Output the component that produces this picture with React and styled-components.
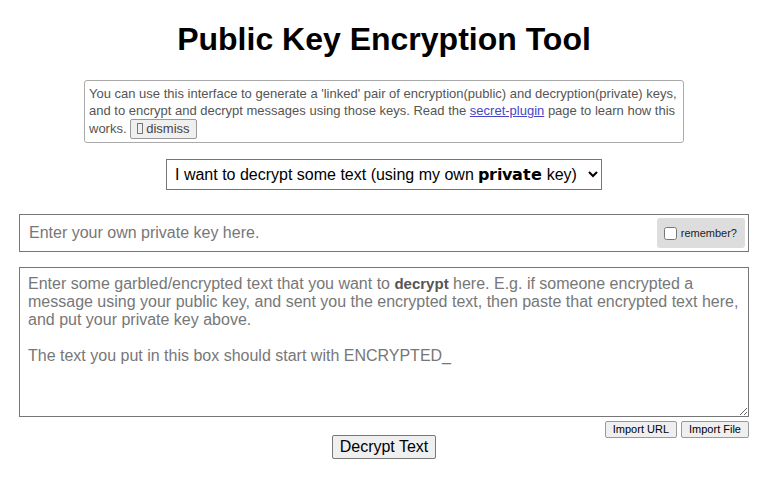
import React, { useState } from 'react'
import styled, { createGlobalStyle } from 'styled-components'

const GlobalStyle = createGlobalStyle`
  body {
    margin: 0;
    background: #fff;
    font-family: "Liberation Sans", Arial, sans-serif;
  }
`

const Page = styled.main`
  display: flex;
  flex-direction: column;
  align-items: center;
  padding: 0 19px;
`

const Title = styled.h1`
  margin: 21px 0 22px;
  font-size: 32px;
  line-height: 37px;
  font-weight: bold;
  color: #000;
`

const Notice = styled.div`
  box-sizing: border-box;
  width: 600px;
  padding: 4px 4px 3px;
  border: 1px solid #aaa;
  border-radius: 3px;
  font-size: 13px;
  line-height: 17px;
  color: #555;
`

const Link = styled.a`
  color: #4646c8;
  text-decoration: underline;
`

const SmallButton = styled.button`
  font-family: inherit;
  font-size: 13px;
  color: ${({ tone }) => tone || '#000'};
  padding: 2px 6px;
  background: #efefef;
  border: 1px solid #999;
  border-radius: 2px;
  line-height: 14px;
`

const Tofu = styled.span`
  display: inline-block;
  width: 4px;
  height: 9px;
  border: 1px solid #777;
  margin-right: 3px;
  vertical-align: -1px;
`

const ModeSelect = styled.select`
  margin-top: 16px;
  width: 436px;
  height: 31px;
  font-family: inherit;
  font-size: 16px;
  color: #000;
  padding: 0 4px;
  border: 1px solid #767676;
  border-radius: 0;
  background: #fff;
`

const KeyRow = styled.div`
  box-sizing: border-box;
  margin-top: 24px;
  width: 100%;
  height: 38px;
  display: flex;
  align-items: center;
  border: 1px solid #777;
  padding: 0 3px 0 9px;
`

const KeyInput = styled.input`
  flex: 1;
  border: none;
  outline: none;
  font-family: inherit;
  font-size: 16px;
  color: #222;
  padding: 0;
  &::placeholder {
    color: #777;
  }
`

const Remember = styled.label`
  display: flex;
  align-items: center;
  gap: 2px;
  height: 30px;
  padding: 0 8px 0 7px;
  background: #ddd;
  border-radius: 3px;
  font-size: 11px;
  color: #222;
  input {
    margin: 0 2px 0 0;
    width: 13px;
    height: 13px;
  }
`

const TextWrap = styled.div`
  position: relative;
  margin-top: 15px;
  width: 100%;
  height: 150px;
`

const CipherText = styled.textarea`
  box-sizing: border-box;
  display: block;
  width: 100%;
  height: 150px;
  border: 1px solid #777;
  padding: 7px 9px;
  font-family: inherit;
  font-size: 16px;
  line-height: 18px;
  color: #222;
  resize: vertical;
  outline: none;
`

const Hint = styled.div`
  position: absolute;
  top: 8px;
  left: 9px;
  right: 9px;
  font-size: 16px;
  line-height: 18px;
  color: #777;
  pointer-events: none;
  p {
    margin: 0 0 18px;
  }
  b {
    color: #555;
    font-size: 15px;
  }
`

const ImportBar = styled.div`
  width: 100%;
  display: flex;
  justify-content: flex-end;
  gap: 4px;
  margin-top: 4px;
  height: 17px;
`

const ImportButton = styled(SmallButton)`
  font-size: 11px;
  line-height: 13px;
  padding: 1px 7px;
`

const DecryptButton = styled.button`
  margin-top: -3px;
  font-family: inherit;
  font-size: 16px;
  color: #000;
  padding: 2px 7px;
  background: #efefef;
  border: 1px solid #777;
  border-radius: 2px;
  line-height: 18px;
`

export default function App () {
  const [key, setKey] = useState('')
  const [text, setText] = useState('')
  const [showNotice, setShowNotice] = useState(true)
  return (
    <Page>
      <GlobalStyle />
      <Title>Public Key Encryption Tool</Title>
      {showNotice && (
        <Notice>
          You can use this interface to generate a 'linked' pair of encryption(public) and decryption(private) keys,
          and to encrypt and decrypt messages using those keys. Read the <Link href='#'>secret-plugin</Link> page
          to learn how this works.{' '}
          <SmallButton tone='#444' onClick={() => setShowNotice(false)}><Tofu />dismiss</SmallButton>
        </Notice>
      )}
      <ModeSelect defaultValue='decrypt'>
        <option value='generate'>I want to generate a new pair of keys</option>
        <option value='encrypt'>I want to encrypt some text (using someone's public key)</option>
        <option value='decrypt'>I want to decrypt some text (using my own 𝗽𝗿𝗶𝘃𝗮𝘁𝗲 key)</option>
      </ModeSelect>
      <KeyRow>
        <KeyInput
          value={key}
          onChange={e => setKey(e.target.value)}
          placeholder='Enter your own private key here.'
        />
        <Remember><input type='checkbox' />remember?</Remember>
      </KeyRow>
      <TextWrap>
        <CipherText value={text} onChange={e => setText(e.target.value)} />
        {!text && (
          <Hint>
            <p>
              Enter some garbled/encrypted text that you want to <b>decrypt</b> here. E.g. if someone encrypted a
              message using your public key, and sent you the encrypted text, then paste that encrypted text here,
              and put your private key above.
            </p>
            <p>The text you put in this box should start with ENCRYPTED_</p>
          </Hint>
        )}
      </TextWrap>
      <ImportBar>
        <ImportButton>Import URL</ImportButton>
        <ImportButton>Import File</ImportButton>
      </ImportBar>
      <DecryptButton>Decrypt Text</DecryptButton>
    </Page>
  )
}
